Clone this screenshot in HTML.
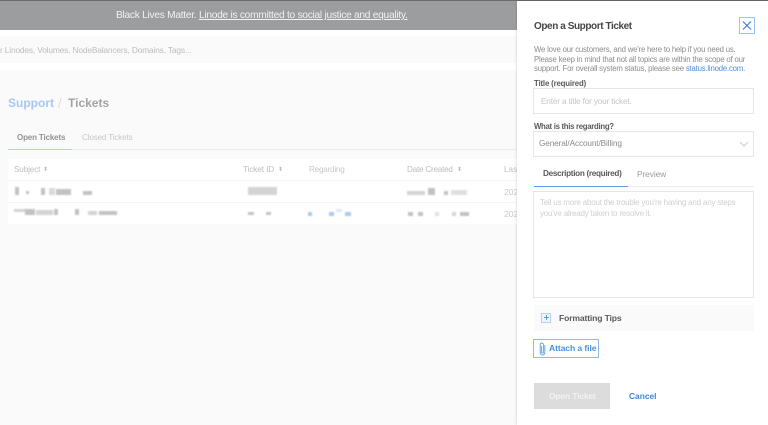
<!DOCTYPE html>
<html><head><meta charset="utf-8">
<style>
html,body{margin:0;padding:0}
body{width:768px;height:425px;overflow:hidden;position:relative;background:#fafafa;font-family:"Liberation Sans",sans-serif}
.a{position:absolute;white-space:nowrap}
.b{position:absolute;background:#c2c2c2;filter:blur(.9px)}
.c{position:absolute;background:#a8c9f2;filter:blur(.9px)}
#root{position:absolute;left:0;top:0;width:768px;height:425px;filter:blur(.35px)}
</style></head><body>
<div id="root">
<div class="a" style="left:0;top:0;width:768px;height:1px;background:#6b6b6e"></div>
<div class="a" style="left:0;top:1px;width:517px;height:29px;background:#9c9d9f"></div>
<div class="a" style="left:0;top:30px;width:517px;height:40px;background:#fff"></div>
<div class="a" style="left:0;top:36px;width:517px;height:27px;background:#fafafa"></div>
<div class="a" style="left:116px;top:9px;font-size:10.2px;letter-spacing:-.27px;color:#f2f2f2;line-height:13px">Black Lives Matter. <span style="text-decoration:underline">Linode is committed to social justice and equality.</span></div>
<div class="a" style="left:0;top:44px;font-size:8.4px;letter-spacing:-.17px;color:#bdbdbd;line-height:12px">r Linodes, Volumes, NodeBalancers, Domains, Tags...</div>
<div class="a" style="left:8px;top:94.5px;font-size:12px;font-weight:bold;color:#a5c8f5;line-height:17px">Support</div>
<div class="a" style="left:58px;top:94.5px;font-size:13.4px;color:#dcdcdc;line-height:17px">/</div>
<div class="a" style="left:68px;top:94.5px;font-size:12px;font-weight:bold;color:#a3a3a3;line-height:17px">Tickets</div>
<div class="a" style="left:17px;top:132px;font-size:8px;letter-spacing:-.15px;color:#939393;font-weight:bold;line-height:12px">Open Tickets</div>
<div class="a" style="left:82px;top:132px;font-size:8.2px;letter-spacing:-.2px;color:#c8c8c8;line-height:12px">Closed Tickets</div>
<div class="a" style="left:8px;top:149px;width:509px;height:1px;background:#ececec"></div>
<div class="a" style="left:8px;top:149px;width:64px;height:1px;background:#b5d0f5"></div>
<div class="a" style="left:8px;top:159px;width:509px;height:65px;background:#fff"></div>
<div class="a" style="left:8px;top:180px;width:509px;height:1px;background:#f4f4f4"></div>
<div class="a" style="left:8px;top:202px;width:509px;height:1px;background:#f4f4f4"></div>
<div class="a" style="left:14px;top:164px;font-size:8.2px;letter-spacing:-.15px;color:#bdbdbd;line-height:12px">Subject</div>
<div class="a" style="left:43px;top:164px;font-size:6px;color:#bdbdbd;line-height:12px">⬍</div>
<div class="a" style="left:243px;top:164px;font-size:8.2px;letter-spacing:-.1px;color:#bdbdbd;line-height:12px">Ticket ID</div>
<div class="a" style="left:278px;top:164px;font-size:6px;color:#bdbdbd;line-height:12px">⬍</div>
<div class="a" style="left:309px;top:164px;font-size:8.2px;letter-spacing:-.25px;color:#c8c8c8;line-height:12px">Regarding</div>
<div class="a" style="left:407px;top:164px;font-size:8.2px;letter-spacing:-.25px;color:#bdbdbd;line-height:12px">Date Created</div>
<div class="a" style="left:457px;top:164px;font-size:6px;color:#bdbdbd;line-height:12px">⬍</div>
<div class="a" style="left:504px;top:164px;font-size:8.2px;color:#bdbdbd;line-height:12px">Last</div>
<div class="a" style="left:504px;top:186px;font-size:8.6px;color:#c8c8c8;line-height:12px">202</div>
<div class="a" style="left:504px;top:208px;font-size:8.6px;color:#c8c8c8;line-height:12px">202</div>

<div class="b" style="left:15px;top:187px;width:4px;height:8px"></div>
<div class="b" style="left:26px;top:191px;width:3px;height:3px"></div>
<div class="b" style="left:41px;top:188px;width:4px;height:7px"></div>
<div class="b" style="left:49px;top:188px;width:6px;height:7px;opacity:.6"></div>
<div class="b" style="left:56px;top:189px;width:15px;height:6px"></div>
<div class="b" style="left:83px;top:191px;width:9px;height:4px"></div>

<div class="b" style="left:14px;top:209px;width:12px;height:3px;opacity:.7"></div>
<div class="b" style="left:25px;top:209px;width:10px;height:6px"></div>
<div class="b" style="left:36px;top:210px;width:17px;height:5px;opacity:.7"></div>
<div class="b" style="left:54px;top:209px;width:4px;height:6px"></div>
<div class="b" style="left:75px;top:209px;width:4px;height:6px"></div>
<div class="b" style="left:88px;top:211px;width:9px;height:4px;opacity:.7"></div>
<div class="b" style="left:99px;top:211px;width:18px;height:4px"></div>

<div class="b" style="left:248px;top:187px;width:29px;height:8px;opacity:.7"></div>
<div class="b" style="left:248px;top:212px;width:6px;height:3px"></div>
<div class="b" style="left:266px;top:212px;width:5px;height:3px"></div>

<div class="c" style="left:308px;top:212px;width:4px;height:4px"></div>
<div class="c" style="left:329px;top:212px;width:5px;height:4px"></div>
<div class="c" style="left:345px;top:212px;width:6px;height:4px"></div>
<div class="c" style="left:336px;top:209px;width:6px;height:3px;opacity:.4"></div>

<div class="b" style="left:407px;top:191px;width:18px;height:4px;opacity:.7"></div>
<div class="b" style="left:428px;top:188px;width:7px;height:7px"></div>
<div class="b" style="left:444px;top:191px;width:4px;height:4px"></div>
<div class="b" style="left:451px;top:190px;width:16px;height:5px;opacity:.5"></div>
<div class="b" style="left:408px;top:212px;width:5px;height:4px"></div>
<div class="b" style="left:418px;top:212px;width:5px;height:4px"></div>
<div class="b" style="left:435px;top:212px;width:4px;height:4px;opacity:.5"></div>
<div class="b" style="left:452px;top:212px;width:4px;height:4px;opacity:.7"></div>
<div class="b" style="left:460px;top:212px;width:9px;height:4px"></div>

<!-- drawer -->
<div class="a" style="left:517px;top:1px;width:251px;height:424px;background:#fff;box-shadow:0 0 3px rgba(0,0,0,.2)"></div>
<div class="a" style="left:534px;top:19.5px;font-size:10px;letter-spacing:-.42px;font-weight:bold;color:#45464a;line-height:14px">Open a Support Ticket</div>
<div class="a" style="left:739px;top:17px;width:14px;height:15px;border:1px solid #9cc2f2"></div>
<svg class="a" style="left:739px;top:17px" width="16" height="17" viewBox="0 0 16 17"><path d="M4 4.5l8 8M12 4.5l-8 8" stroke="#3b80dc" stroke-width="1.2" fill="none"/></svg>

<div class="a" style="left:534px;top:45px;font-size:7.8px;letter-spacing:-.2px;color:#8d8d8d;line-height:9.7px">We love our customers, and we're here to help if you need us.<br>Please keep in mind that not all topics are within the scope of our<br>support. For overall system status, please see <span style="color:#4a90e2">status.linode.com.</span></div>
<div class="a" style="left:534px;top:78px;font-size:7.8px;letter-spacing:-.15px;font-weight:bold;color:#5a5b5f;line-height:11px">Title (required)</div>
<div class="a" style="left:533px;top:88px;width:219px;height:24px;border:1px solid #e6e6e6"></div>
<div class="a" style="left:541px;top:95.5px;font-size:8.2px;letter-spacing:-.15px;color:#c4c4c4;line-height:12px">Enter a title for your ticket.</div>

<div class="a" style="left:534px;top:121px;font-size:7.8px;letter-spacing:-.3px;font-weight:bold;color:#5a5b5f;line-height:11px">What is this regarding?</div>
<div class="a" style="left:533px;top:131px;width:219px;height:24px;border:1px solid #e6e6e6"></div>
<div class="a" style="left:539px;top:138px;font-size:8.2px;letter-spacing:-.1px;color:#8a8a8a;line-height:12px">General/Account/Billing</div>
<svg class="a" style="left:739px;top:141px" width="10" height="6" viewBox="0 0 10 6"><path d="M1 1l4 4 4-4" stroke="#c9c9c9" fill="none"/></svg>

<div class="a" style="left:543px;top:168px;font-size:8.2px;letter-spacing:-.32px;font-weight:bold;color:#5a5b5f;line-height:12px">Description (required)</div>
<div class="a" style="left:637px;top:168px;font-size:8.4px;letter-spacing:-.1px;color:#9a9a9a;line-height:12px">Preview</div>
<div class="a" style="left:534px;top:186px;width:220px;height:1px;background:#ececec"></div>
<div class="a" style="left:534px;top:186px;width:94px;height:1px;background:#5d9ce8"></div>
<div class="a" style="left:533px;top:191px;width:219px;height:105px;border:1px solid #e6e6e6"></div>
<div class="a" style="left:540px;top:198px;font-size:8px;letter-spacing:-.2px;color:#cfcfcf;line-height:10.6px">Tell us more about the trouble you're having and any steps<br>you've already taken to resolve it.</div>

<div class="a" style="left:534px;top:305px;width:220px;height:26px;background:#fafafa"></div>
<div class="a" style="left:541px;top:313px;width:8px;height:8px;border:1px solid #b5d0f5;background:#f0f5fd"></div>
<div class="a" style="left:543.5px;top:317px;width:5px;height:1px;background:#5d9ce8"></div>
<div class="a" style="left:545.5px;top:315px;width:1px;height:5px;background:#5d9ce8"></div>
<div class="a" style="left:559px;top:312px;font-size:8.6px;letter-spacing:-.15px;font-weight:bold;color:#5a5b5f;line-height:13px">Formatting Tips</div>

<div class="a" style="left:533px;top:339px;width:64px;height:17px;border:1px solid #8fb9ef;border-radius:1px"></div>
<svg class="a" style="left:538px;top:341px" width="9" height="16" viewBox="0 0 9 16"><path d="M6.8 4v7.7a2.3 2.3 0 0 1-4.6 0V3.6a1.6 1.6 0 0 1 3.2 0v7.6a.9.9 0 0 1-1.8 0V5" stroke="#5d9ce8" stroke-width=".9" fill="none"/></svg>
<div class="a" style="left:549px;top:342px;font-size:8.6px;letter-spacing:-.1px;font-weight:bold;color:#4a90e2;line-height:13px">Attach a file</div>

<div class="a" style="left:534px;top:383px;width:76px;height:26px;background:#dcdcdc"></div>
<div class="a" style="left:549px;top:389.5px;font-size:8.4px;letter-spacing:-.1px;font-weight:bold;color:#f2f2f2;line-height:13px">Open Ticket</div>
<div class="a" style="left:629px;top:389.5px;font-size:8.4px;font-weight:bold;color:#3f86e0;line-height:13px">Cancel</div>
</div>
</body></html>
